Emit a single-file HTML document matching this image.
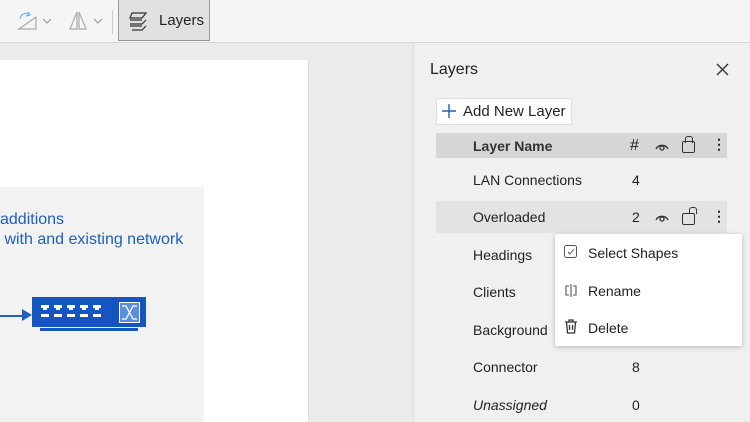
<html><head><style>
body{margin:0;width:750px;height:422px;overflow:hidden;background:#ebebeb;font-family:"Liberation Sans",sans-serif;position:relative}
.a{position:absolute}
.t{font-size:14px;color:#222}
</style></head><body>
<div class="a" style="left:0;top:0;width:750px;height:42px;background:#f5f5f5;border-bottom:1px solid #d6d6d6"></div>
<svg class="a" style="left:16px;top:9px" width="95" height="24">
<path d="M3 20 L20 8 L20 20 Z" fill="none" stroke="#aaa" stroke-width="1.2"/>
<path d="M4 10 A6 6 0 0 1 14 6 M12 3 L14 6 L10 7" fill="none" stroke="#6fb3e6" stroke-width="1.2"/>
<path d="M27 10 l4 4 l4 -4" fill="none" stroke="#999" stroke-width="1.2"/>
<path d="M61 3 L54 20 L61 20 Z M63 3 L70 20 L63 20 Z" fill="none" stroke="#aaa" stroke-width="1.2"/>
<path d="M78 10 l4 4 l4 -4" fill="none" stroke="#999" stroke-width="1.2"/>
</svg>
<div class="a" style="left:112px;top:10px;width:1px;height:24px;background:#ccc"></div>
<div class="a" style="left:118px;top:0;width:92px;height:41px;background:#e1e1e1;border:1px solid #999;border-top:none;box-sizing:border-box"></div>
<svg class="a" style="left:128px;top:11px" width="20" height="20"><path d="M4 2 H18 L14 7 H2 Z M2 9 H14 M18 9 L14 13 H2 M2 15 H14 M18 15 L14 19 H4" fill="none" stroke="#333" stroke-width="1.2"/></svg>
<div class="a t" style="left:159px;top:12px;font-size:15px">Layers</div>
<div class="a" style="left:0;top:60px;width:308px;height:362px;background:#fff;border-right:1px solid #ddd"></div>
<div class="a" style="left:0;top:187px;width:204px;height:235px;background:#f2f2f2"></div>
<div class="a" style="left:0;top:210px;font-size:16px;color:#1e5fbf;line-height:20px">additions<br>&nbsp;with and existing network</div>
<div class="a" style="left:0;top:315px;width:28px;height:1.5px;background:#1e5fbf"></div>
<svg class="a" style="left:22px;top:309px" width="10" height="12"><path d="M0 0 L10 6 L0 12Z" fill="#1e5fbf"/></svg>
<svg class="a" style="left:32px;top:297px" width="114" height="36">
<rect width="114" height="30" fill="#1555c0"/><rect x="8" y="31" width="98" height="3" fill="#1555c0"/>
<g fill="#fff">
<rect x="9" y="8" width="8" height="3"/><rect x="11" y="11" width="4" height="2"/>
<rect x="22" y="8" width="8" height="3"/><rect x="24" y="11" width="4" height="2"/>
<rect x="35" y="8" width="8" height="3"/><rect x="37" y="11" width="4" height="2"/>
<rect x="48" y="8" width="8" height="3"/><rect x="50" y="11" width="4" height="2"/>
<rect x="61" y="8" width="8" height="3"/><rect x="63" y="11" width="4" height="2"/>
<rect x="9" y="17" width="8" height="3"/><rect x="22" y="17" width="8" height="3"/><rect x="35" y="17" width="8" height="3"/><rect x="48" y="17" width="8" height="3"/><rect x="61" y="17" width="8" height="3"/>
</g>
<rect x="87.5" y="5.5" width="20" height="20" fill="#5a8fe0" stroke="#fff"/>
<path d="M90 9 H94 L101 22 H105 M90 22 H94 L101 9 H105" fill="none" stroke="#fff" stroke-width="1.3"/>
</svg>
<div class="a" style="left:413px;top:43px;width:337px;height:379px;background:#f0f0f0;border-left:1px solid #ddd"></div>
<div class="a" style="left:430px;top:61px;font-size:16px;color:#222">Layers</div>
<svg class="a" style="left:716px;top:63px" width="13" height="13"><path d="M1 1 L12 12 M12 1 L1 12" stroke="#333" stroke-width="1.4"/></svg>
<div class="a" style="left:436px;top:98px;width:136px;height:27px;background:#fff;border:1px solid #ddd;border-radius:3px;box-sizing:border-box"></div>
<svg class="a" style="left:442px;top:104px" width="14" height="14"><path d="M7 0 V14 M0 7 H14" stroke="#1e5fbf" stroke-width="1.4"/></svg>
<div class="a t" style="left:463px;top:103px;font-size:15px">Add New Layer</div>
<div class="a" style="left:436px;top:133px;width:291px;height:25px;background:#d6d6d6"></div>
<div class="a t" style="left:473px;top:138px;font-weight:bold;color:#333">Layer Name</div>
<div class="a t" style="left:630px;top:137px;font-size:16px">#</div>
<svg class="a" style="left:655px;top:141px" width="14" height="10"><path d="M1 8 A6.5 6 0 0 1 13 8" fill="none" stroke="#333" stroke-width="1.3"/><circle cx="7" cy="7" r="2" fill="none" stroke="#333" stroke-width="1.3"/></svg>
<div class="a" style="left:682px;top:141px;width:11px;height:10px;border:1.3px solid #333;border-radius:2px"></div>
<div class="a" style="left:685px;top:136px;width:6px;height:6px;border:1.3px solid #333;border-bottom:none;border-radius:3px 3px 0 0"></div>
<div class="a t" style="left:712px;top:136px;font-weight:bold">⋮</div>
<div class="a t" style="left:473px;top:172px">LAN Connections</div><div class="a t" style="left:632px;top:172px">4</div>
<div class="a" style="left:436px;top:201px;width:291px;height:32px;background:#e3e3e3"></div>
<div class="a t" style="left:473px;top:209px">Overloaded</div><div class="a t" style="left:632px;top:209px">2</div>
<svg class="a" style="left:655px;top:212px" width="14" height="10"><path d="M1 8 A6.5 6 0 0 1 13 8" fill="none" stroke="#333" stroke-width="1.3"/><circle cx="7" cy="7" r="2" fill="none" stroke="#333" stroke-width="1.3"/></svg>
<div class="a" style="left:682px;top:213px;width:11px;height:10px;border:1.3px solid #333;border-radius:2px"></div>
<div class="a" style="left:689px;top:207px;width:6px;height:6px;border:1.3px solid #333;border-bottom:none;border-radius:3px 3px 0 0"></div>
<div class="a t" style="left:712px;top:208px;font-weight:bold">⋮</div>
<div class="a t" style="left:473px;top:247px">Headings</div>
<div class="a t" style="left:473px;top:284px">Clients</div>
<div class="a t" style="left:473px;top:322px">Background</div>
<div class="a t" style="left:473px;top:359px">Connector</div><div class="a t" style="left:632px;top:359px">8</div>
<div class="a t" style="left:473px;top:397px;font-style:italic">Unassigned</div><div class="a t" style="left:632px;top:397px">0</div>
<div class="a" style="left:555px;top:234px;width:187px;height:112px;background:#fff;box-shadow:0 1px 5px rgba(0,0,0,.25);border-radius:2px"></div>
<svg class="a" style="left:564px;top:245px" width="14" height="14"><rect x="0.5" y="0.5" width="12" height="12" rx="2" fill="none" stroke="#555"/><path d="M4 7 L6 9 L10 4" fill="none" stroke="#555"/></svg>
<div class="a t" style="left:588px;top:245px">Select Shapes</div>
<svg class="a" style="left:564px;top:284px" width="14" height="14"><path d="M5 2 H2 V11 H5 M9 2 H12 V11 H9 M7 0 V13" fill="none" stroke="#555" stroke-width="1.1"/></svg>
<div class="a t" style="left:588px;top:283px">Rename</div>
<svg class="a" style="left:564px;top:319px" width="14" height="16"><path d="M1 3 H13 M5 3 V1 H9 V3 M2.5 3 L3.5 14 H10.5 L11.5 3 M5.5 6 V11 M8.5 6 V11" fill="none" stroke="#333" stroke-width="1.3"/></svg>
<div class="a t" style="left:588px;top:320px">Delete</div>
</body></html>
